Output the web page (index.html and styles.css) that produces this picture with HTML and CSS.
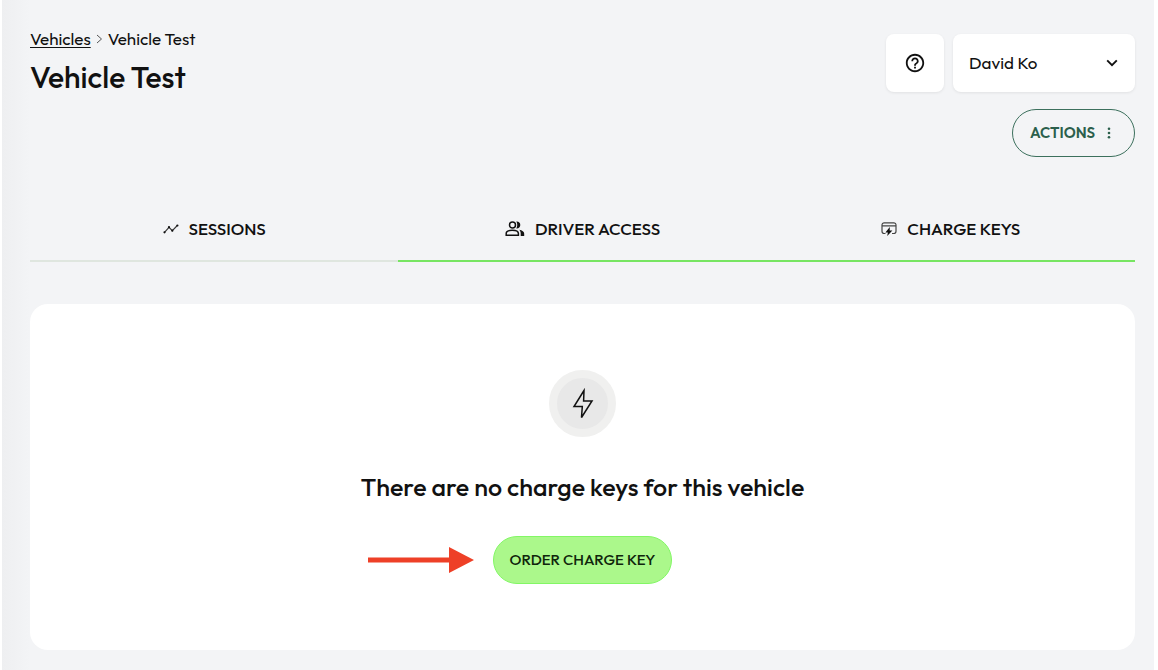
FILE: index.html
```html
<!DOCTYPE html>
<html lang="en">
<head>
<meta charset="utf-8">
<meta name="viewport" content="width=device-width, initial-scale=1">
<title>Vehicle Test</title>
<link rel="stylesheet" href="styles.css">
</head>
<body>
<main class="page">
  <header class="header">
    <div class="heading">
      <nav class="crumbs" aria-label="Breadcrumb">
        <a class="crumb-link" href="#">Vehicles</a>
        <svg class="crumb-sep" width="7" height="10" viewBox="0 0 7 10" aria-hidden="true"><path d="M1 1l4.500 4L1 9" fill="none" stroke="#555" stroke-width="1"/></svg>
        <span>Vehicle Test</span>
      </nav>
      <h1 class="title">Vehicle Test</h1>
    </div>
    <div class="tools">
      <div class="account">
        <button class="help" type="button" aria-label="Help">
          <svg width="22" height="22" viewBox="0 0 24 24" fill="#111"><path d="M11 18h2v-2h-2v2zm1-16C6.480 2 2 6.480 2 12s4.480 10 10 10 10-4.480 10-10S17.520 2 12 2zm0 18c-4.410 0-8-3.590-8-8s3.590-8 8-8 8 3.590 8 8-3.590 8-8 8zm0-14c-2.210 0-4 1.790-4 4h2c0-1.100.9-2 2-2s2 .9 2 2c0 2-3 1.750-3 5h2c0-2.250 3-2.500 3-5 0-2.210-1.790-4-4-4z"/></svg>
        </button>
        <div class="user">
          <select class="user-select" aria-label="Account"><option>David Ko</option></select>
          <svg class="user-arrow" width="12" height="8" viewBox="0 0 12 8" aria-hidden="true"><path d="M1.200 1.300L6 6.100l4.800-4.800" fill="none" stroke="#111" stroke-width="1.900"/></svg>
        </div>
      </div>
      <button class="actions" type="button">
        <span>ACTIONS</span>
        <svg width="4" height="12" viewBox="0 0 4 12" fill="#2b5f4c" aria-hidden="true"><circle cx="2" cy="1.700" r="1.300"/><circle cx="2" cy="6" r="1.300"/><circle cx="2" cy="10.300" r="1.300"/></svg>
      </button>
    </div>
  </header>

  <div class="tabs" role="tablist">
    <button class="tab" type="button" role="tab" aria-selected="false">
      <svg width="16" height="10" viewBox="0 0 16 10" aria-hidden="true"><path d="M1.500 8.300L6 3.300l3.300 3.400 5-5.200" fill="none" stroke="#333" stroke-width="1.100"/><g fill="#111"><circle cx="1.500" cy="8.300" r="1.100"/><circle cx="6" cy="3.200" r="1.100"/><circle cx="9.300" cy="6.700" r="1.100"/><circle cx="14.400" cy="1.500" r="1.100"/></g></svg>
      <span>SESSIONS</span>
    </button>
    <button class="tab tab-on" type="button" role="tab" aria-selected="false">
      <svg width="20" height="16" viewBox="0 0 20 16" aria-hidden="true"><circle cx="7.500" cy="4" r="3" fill="none" stroke="#111" stroke-width="1.500"/><path d="M1.200 14.200v-1.700C1.200 10.500 4 9.300 7.200 9.300s6.200 1.200 6.200 3.200v1.700z" fill="none" stroke="#111" stroke-width="1.500"/><path d="M11.300.6c2.300-.3 4 1.400 4 3.400s-1.700 3.700-4 3.400c1.300-1.900 1.300-4.900 0-6.800zM14.200 8.800c3 .6 5 1.900 5 3.900V15h-3.500v-2.400c0-1.600-.5-2.800-1.500-3.800z" fill="#111"/></svg>
      <span>DRIVER ACCESS</span>
    </button>
    <button class="tab tab-on" type="button" role="tab" aria-selected="true">
      <svg width="16" height="14" viewBox="0 0 16 14" aria-hidden="true"><path d="M4.500 11.500H3.200A2.200 2.200 0 0 1 1 9.300V3a2.200 2.200 0 0 1 2.200-2.200h9.600A2.200 2.200 0 0 1 15 3v6.300a2.200 2.200 0 0 1-2.200 2.200H11M1 3.800h14" fill="none" stroke="#444" stroke-width="1.200"/><path d="M8.800 5L4.400 10.600h2.500L6.200 14l5.200-5.600H8.700z" fill="#111"/></svg>
      <span>CHARGE KEYS</span>
    </button>
  </div>

  <section class="card">
    <div class="badge">
      <svg width="22" height="32" viewBox="0 0 22 32" aria-hidden="true"><path d="M12 2.500L2 18.500h8.300L9.500 29.500 20 13h-8.400z" fill="none" stroke="#111" stroke-width="1.500"/></svg>
    </div>
    <h2 class="message">There are no charge keys for this vehicle</h2>
    <div class="order-wrap">
      <svg class="pointer" width="106" height="26" viewBox="0 0 106 26" aria-hidden="true"><path d="M0 10.500h81V0l25 13-25 13V15.500H0z" fill="#ee4027"/></svg>
      <button class="order" type="button">ORDER CHARGE KEY</button>
    </div>
  </section>
</main>
</body>
</html>
```
FILE: styles.css
```css
* {
  box-sizing: border-box;
}

body {
  margin: 0 4px 0 2px;
  background: #fff;
  color: #111;
  font-family: Outfit, Lato, "Liberation Sans", sans-serif;
  font-size: 17px;
  line-height: 24px;
}

button,
select {
  font: inherit;
  color: inherit;
  cursor: pointer;
}

svg {
  display: block;
  flex: none;
}

.page {
  min-height: 100vh;
  padding: 27px 19px 19px 28px;
  background: linear-gradient(90deg, #eeeff1, #f3f4f6 28px);
}

.header {
  display: flex;
  justify-content: space-between;
}

.crumbs {
  display: flex;
  align-items: center;
  gap: 5px;
}

.crumb-link {
  color: inherit;
  text-underline-offset: 2px;
}

.title {
  margin: 6px 0 0;
  font-size: 30px;
  line-height: 40px;
  font-weight: 500;
}

.tools {
  display: flex;
  flex-direction: column;
  align-items: flex-end;
  gap: 17px;
  padding-top: 7px;
}

.account {
  display: flex;
  gap: 9px;
}

.help,
.user {
  height: 58px;
  border: 0;
  border-radius: 8px;
  background: #fff;
  box-shadow: 0 1px 3px rgba(0, 0, 0, 0.08);
}

.help {
  display: flex;
  align-items: center;
  justify-content: center;
  width: 58px;
  padding: 0;
}

.user {
  position: relative;
  width: 182px;
}

.user-select {
  width: 100%;
  height: 100%;
  padding: 0 40px 0 16px;
  border: 0;
  border-radius: 8px;
  background: transparent;
  appearance: none;
}

.user-arrow {
  position: absolute;
  top: 25px;
  right: 17px;
  pointer-events: none;
}

.actions {
  display: flex;
  align-items: center;
  justify-content: space-between;
  width: 123px;
  height: 48px;
  padding: 0 23px 0 17px;
  border: 1px solid #3c705d;
  border-radius: 24px;
  background: transparent;
  color: #2b5f4c;
  font-size: 15px;
  font-weight: 600;
}

.tabs {
  display: grid;
  grid-template-columns: repeat(3, 1fr);
  margin-top: 39px;
}

.tab {
  display: flex;
  align-items: center;
  justify-content: center;
  gap: 10px;
  height: 66px;
  padding: 2px 0 0;
  border: 0;
  border-bottom: 2px solid #dfe6df;
  background: none;
  font-weight: 500;
}

.tab-on {
  border-bottom-color: #77e562;
}

.card {
  display: flex;
  flex-direction: column;
  align-items: center;
  margin-top: 42px;
  padding: 66px 24px;
  border-radius: 18px;
  background: #fff;
}

.badge {
  display: flex;
  align-items: center;
  justify-content: center;
  width: 67px;
  height: 67px;
  border: 8px solid #f0f0ef;
  border-radius: 50%;
  background: #e8e8e8;
}

.message {
  margin: 33px 0 32px;
  font-size: 25px;
  line-height: 34px;
  font-weight: 500;
}

.order-wrap {
  position: relative;
}

.order {
  width: 179px;
  height: 48px;
  padding: 0;
  border: 1px solid #82f765;
  border-radius: 24px;
  background: #abf88b;
  color: #10260c;
  font-size: 15px;
  font-weight: 500;
}

.pointer {
  position: absolute;
  top: 11px;
  right: 198px;
}
```
